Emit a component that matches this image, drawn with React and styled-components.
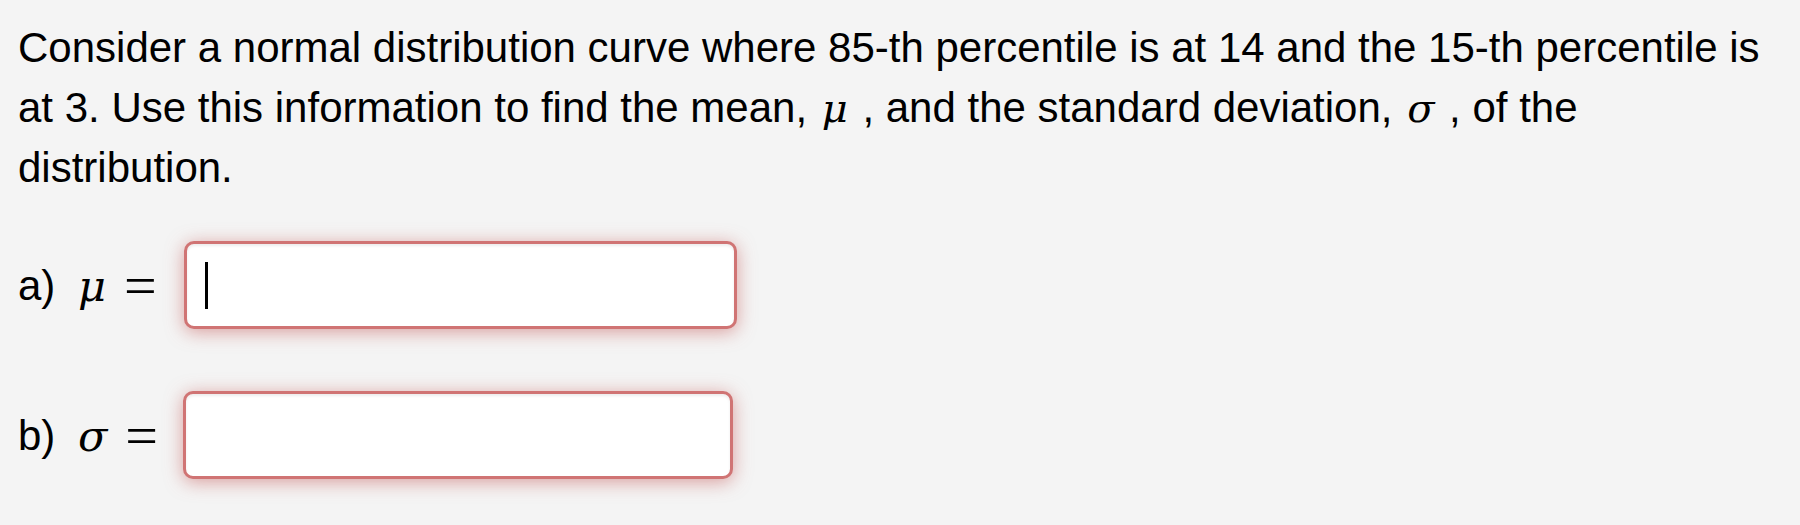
import React from "react";
import styled, { createGlobalStyle } from "styled-components";

const Global = createGlobalStyle`
  html, body {
    margin: 0;
    padding: 0;
    background: #f4f4f4;
  }
  body {
    font-family: "Liberation Sans", Arial, sans-serif;
    color: #000;
  }
`;

const Page = styled.div`
  width: 1800px;
  height: 525px;
  box-sizing: border-box;
  padding: 18px 34px 0 18px;
  background: #f4f4f4;
  display: flex;
  flex-direction: column;
`;

const Problem = styled.p`
  margin: 0;
  font-size: 42px;
  line-height: 60px;
`;

const MathVar = styled.span`
  font-family: "DejaVu Serif", "Liberation Serif", serif;
  font-style: italic;
  font-size: ${(p) => (p.$inline ? 40 : 43)}px;
  margin: 0 ${(p) => (p.$inline ? 3 : 0)}px;
`;

const Answers = styled.div`
  margin-top: 43px;
  display: flex;
  flex-direction: column;
  gap: 62px;
`;

const Row = styled.div`
  display: flex;
  align-items: center;
  height: 88px;
`;

const Label = styled.div`
  display: flex;
  align-items: center;
  font-size: 42px;
  width: ${(p) => p.$width}px;
  flex: none;
  padding-top: 2px;
`;

const Part = styled.span`
  width: 60px;
  flex: none;
`;

const Eq = styled.span`
  font-family: "Liberation Serif", "DejaVu Serif", serif;
  font-size: 58px;
  line-height: 1;
  margin-left: 18px;
`;

const Field = styled.div`
  box-sizing: border-box;
  width: ${(p) => p.$width}px;
  height: 88px;
  border: 3px solid #d07474;
  border-radius: 10px;
  background: #fff;
  box-shadow: inset 0 2px 3px rgba(0, 0, 0, 0.075),
    0 3px 18px rgba(200, 100, 98, 0.6);
  display: flex;
  align-items: center;
  padding-left: 18px;
`;

const Caret = styled.span`
  width: 3px;
  height: 47px;
  background: #000;
  flex: none;
`;

const Input = styled.input`
  flex: 1;
  min-width: 0;
  height: 100%;
  border: none;
  outline: none;
  background: transparent;
  font-family: "Liberation Sans", Arial, sans-serif;
  font-size: 36px;
  padding: 0 4px;
`;

export default function App() {
  return (
    <>
      <Global />
      <Page>
        <Problem>
          Consider a normal distribution curve where 85-th percentile is at 14
          and the 15-th percentile is at 3. Use this information to find the
          mean, <MathVar $inline>μ</MathVar> , and the standard deviation,{" "}
          <MathVar $inline>σ</MathVar> , of the distribution.
        </Problem>
        <Answers>
          <Row>
            <Label $width={166}>
              <Part>a)</Part>
              <MathVar>μ</MathVar>
              <Eq>=</Eq>
            </Label>
            <Field $width={553}>
              <Caret />
              <Input aria-label="mu" />
            </Field>
          </Row>
          <Row>
            <Label $width={165}>
              <Part>b)</Part>
              <MathVar>σ</MathVar>
              <Eq>=</Eq>
            </Label>
            <Field $width={550}>
              <Input aria-label="sigma" />
            </Field>
          </Row>
        </Answers>
      </Page>
    </>
  );
}
